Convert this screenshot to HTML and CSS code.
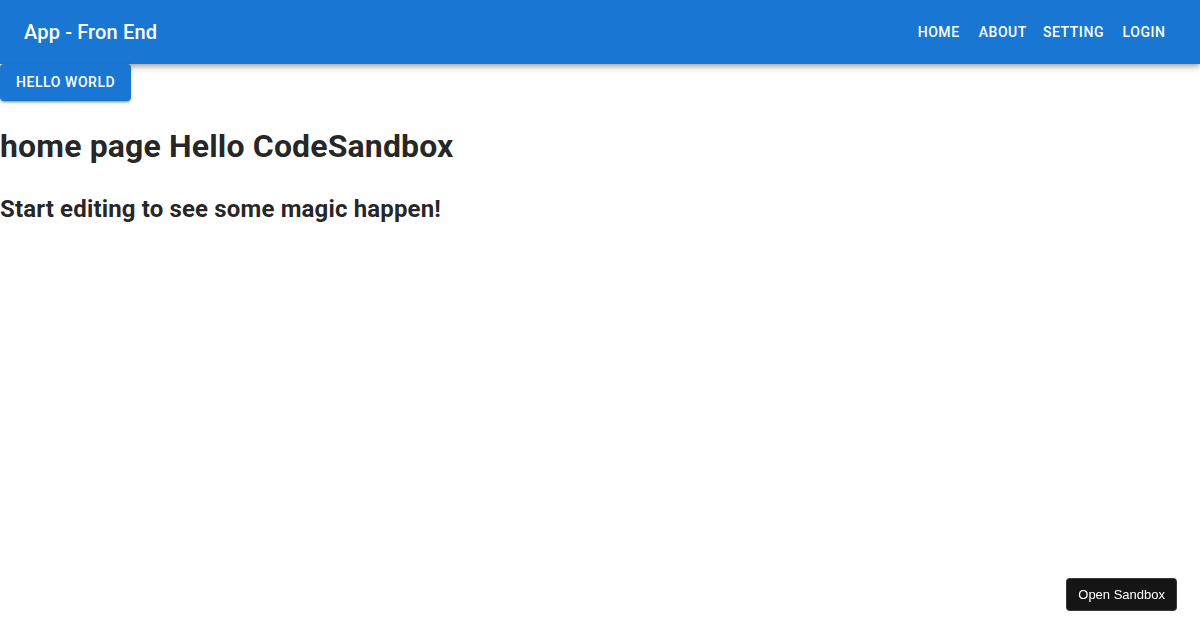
FILE: index.html
```html
<!DOCTYPE html>
<html lang="en">
<head>
  <meta charset="UTF-8" />
  <meta name="viewport" content="width=device-width, initial-scale=1.0" />
  <title>App - Fron End</title>
  <link rel="stylesheet" href="styles.css">
</head>
<body>
  <header class="app-bar">
    <div class="toolbar">
      <div class="title">App - Fron End</div>
      <button class="nav-btn">Home</button>
      <button class="nav-btn">About</button>
      <button class="nav-btn">Setting</button>
      <button class="nav-btn">Login</button>
    </div>
  </header>
  <div class="App">
    <button class="contained-btn">Hello World</button>
    <h1>home page Hello CodeSandbox</h1>
    <h2>Start editing to see some magic happen!</h2>
  </div>
  <a class="open-sandbox" href="#">Open Sandbox</a>
</body>
</html>
```

FILE: styles.css
```css
body {
  margin: 0;
  font-family: Roboto, "Helvetica Neue", Arial, sans-serif;
  font-size: 16px;
  line-height: 1.5;
  letter-spacing: 0.00938em;
  color: rgba(0,0,0,0.87);
  background: #fff;
}
.app-bar {
  background-color: #1976d2;
  color: #fff;
  box-shadow: 0px 2px 4px -1px rgba(0,0,0,0.2), 0px 4px 5px 0px rgba(0,0,0,0.14), 0px 1px 10px 0px rgba(0,0,0,0.12);
  position: relative;
}
.toolbar {
  display: flex;
  align-items: center;
  min-height: 64px;
  padding: 0 24px;
}
.title {
  flex-grow: 1;
  font-size: 20px;
  font-weight: 500;
  line-height: 1.6;
  letter-spacing: 0.0075em;
}
.nav-btn {
  font-family: Roboto, sans-serif;
  font-size: 14px;
  font-weight: 500;
  line-height: 1.75;
  letter-spacing: 0.04em;
  text-transform: uppercase;
  min-width: 64px;
  padding: 6px 8px;
  border: none;
  border-radius: 4px;
  background: transparent;
  color: inherit;
  cursor: pointer;
}
.App {
  position: relative;
}
.contained-btn {
  font-family: Roboto, sans-serif;
  font-size: 14px;
  font-weight: 500;
  line-height: 1.75;
  letter-spacing: 0.04em;
  text-transform: uppercase;
  min-width: 64px;
  padding: 6px 16px;
  border: none;
  border-radius: 4px;
  background-color: #1976d2;
  color: #fff;
  box-shadow: 0px 3px 1px -2px rgba(0,0,0,0.2), 0px 2px 2px 0px rgba(0,0,0,0.14), 0px 1px 5px 0px rgba(0,0,0,0.12);
  cursor: pointer;
}
h1 {
  font-size: 32px;
  margin: 21.44px 0;
}
h2 {
  font-size: 24px;
  margin: 19.92px 0;
}
.open-sandbox {
  position: fixed;
  right: 23px;
  bottom: 19px;
  background: #151515;
  color: #fff;
  font-family: "Liberation Sans", Arial, sans-serif;
  font-size: 13px;
  line-height: 17px;
  letter-spacing: 0;
  padding: 7px 11px;
  border-radius: 4px;
  border: 1px solid rgba(255,255,255,0.15);
  text-decoration: none;
}
```
